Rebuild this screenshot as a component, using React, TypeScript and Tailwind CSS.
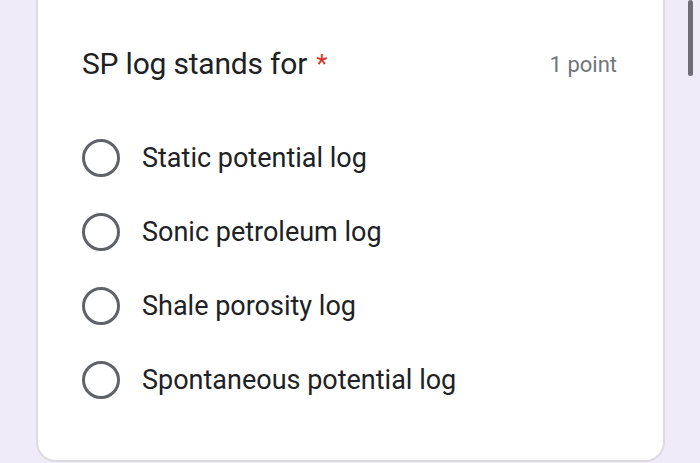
import React from 'react'

const options = [
  'Static potential log',
  'Sonic petroleum log',
  'Shale porosity log',
  'Spontaneous potential log',
]

export default function App() {
  return (
    <div
      className="relative w-[700px] h-[463px] overflow-hidden bg-[#f0ebf8]"
      style={{ fontFamily: 'Roboto, "Noto Sans", sans-serif' }}
    >
      <div className="ml-[36px] mt-[-20px] w-[629px] h-[482px] bg-white border-2 border-[#dcdae3] rounded-[20px] pl-[44px] pr-[46px] pt-[64px]">
        <div className="flex items-start justify-between">
          <div className="flex items-start text-[30px] leading-[36px] text-[#202124] tracking-[-0.2px]">
            <span>SP log stands for</span>
            <span className="ml-[9px] text-[26px] text-[#d93025]">*</span>
          </div>
          <div className="text-[22px] leading-[36px] text-[#70757a] mt-[1px]">1 point</div>
        </div>
        <div className="mt-[56px] flex flex-col gap-[36px]">
          {options.map((o) => (
            <label key={o} className="flex items-center h-[38px]">
              <span className="w-[38px] h-[38px] rounded-full border-[3px] border-[#5f6368] shrink-0" />
              <span className="ml-[22px] text-[27px] text-[#202124] leading-[38px]">{o}</span>
            </label>
          ))}
        </div>
      </div>
      <div className="absolute left-[688px] top-0 w-[5px] h-[76px] rounded-full bg-[#6f6c75]" />
    </div>
  )
}
